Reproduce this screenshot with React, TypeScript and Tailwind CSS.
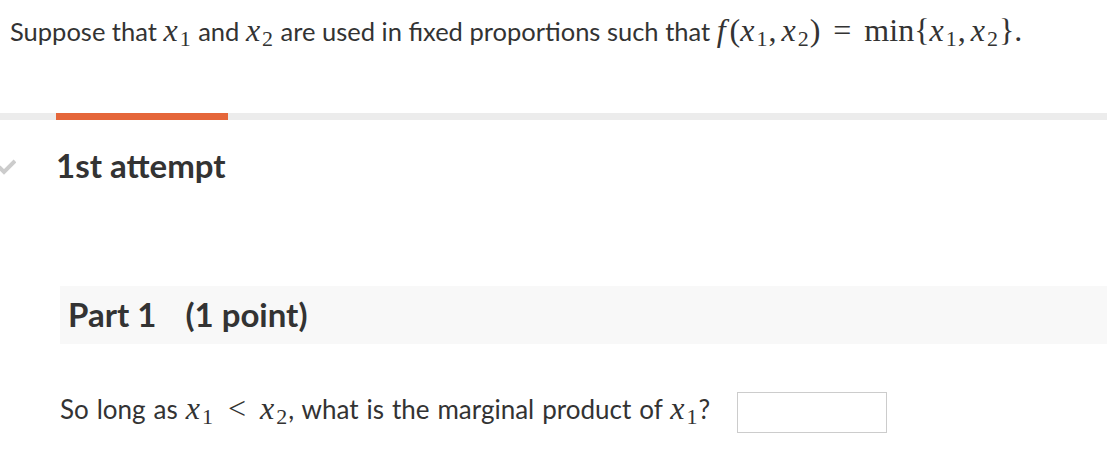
import React from 'react';

const Var = ({ n }: { n: string }) => (
  <span className="font-['Liberation_Serif',serif] whitespace-nowrap">
    <span className="italic text-[32px] mr-[2px]">x</span>
    <span className="text-[22px] align-[-5px] mr-[1px]">{n}</span>
  </span>
);

const Comma = () => <span className="mr-[5px]">,</span>;

export default function App() {
  return (
    <div className="bg-white w-[1107px] h-[457px] overflow-hidden font-['Lato','Noto_Sans',sans-serif] text-[#333]">
      <p className="pl-[10px] h-[57px] pt-[12px] text-[25.5px] leading-[36px] whitespace-nowrap">
        Suppose that <Var n="1" /> and <Var n="2" /> are used in fixed proportions such that{' '}
        <span className="font-['Liberation_Serif',serif] text-[32px]">
          <span className="italic mr-[4px]">f</span>(<Var n="1" />
          <Comma />
          <Var n="2" />)<span className="mx-[13px]">=</span>min{'{'}<Var n="1" />
          <Comma />
          <Var n="2" />
          {'}'}.
        </span>
      </p>

      <div className="mt-[56px] h-[7px] bg-[#ececec] pl-[56px]">
        <div className="w-[172px] h-full bg-[#e5663a]" />
      </div>

      <div className="flex items-center mt-[28px] h-[36px]">
        <svg width="18" height="18" viewBox="0 0 18 18" className="ml-[-2px] mt-[2px] shrink-0">
          <path d="M1 9 L6 14 L17 3" stroke="#cccccc" strokeWidth="4" fill="none" />
        </svg>
        <h2 className="ml-[40px] text-[33px] font-bold">1st attempt</h2>
      </div>

      <div className="mt-[102px] ml-[60px] h-[58px] bg-[#f8f8f8] flex items-center pl-[8px]">
        <h3 className="text-[33px] font-bold whitespace-nowrap">
          Part 1<span className="ml-[29px]">(1 point)</span>
        </h3>
      </div>

      <div className="mt-[46px] ml-[60px] flex items-center">
        <p className="text-[26px] leading-[36px] whitespace-nowrap [word-spacing:1.3px]">
          So long as <Var n="1" />
          <span className="font-['Liberation_Serif',serif] text-[32px] mx-[14px]">&lt;</span>
          <Var n="2" />, what is the marginal product of <Var n="1" />?
        </p>
        <input className="ml-[27px] w-[150px] h-[41px] border border-[#cccccc] outline-none" />
      </div>
    </div>
  );
}
